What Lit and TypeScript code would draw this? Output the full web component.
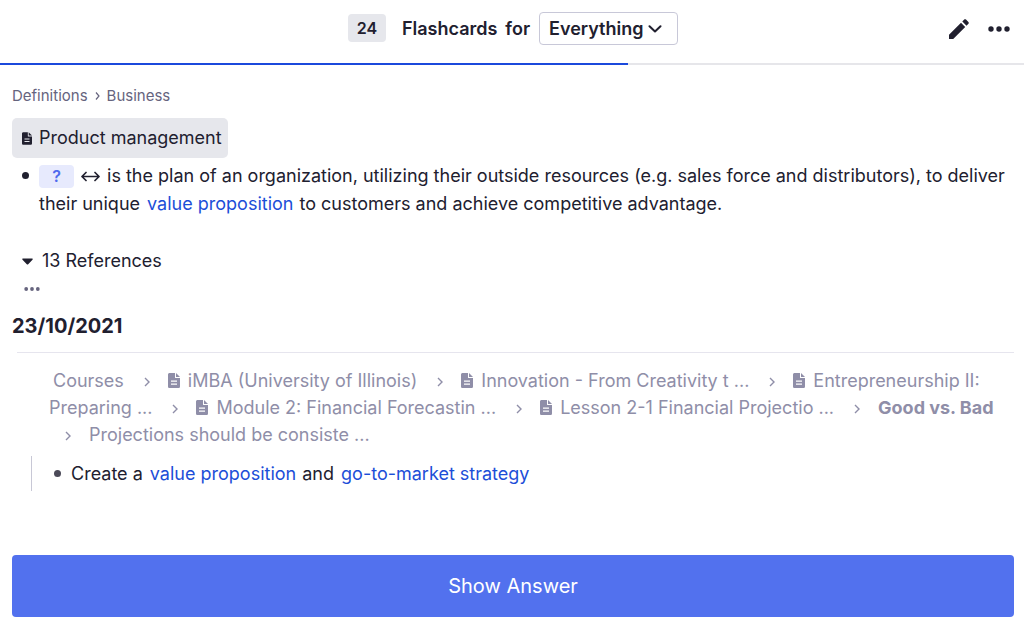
import { LitElement, html, css, svg, nothing } from "lit";
import { customElement, property, state } from "lit/decorators.js";

const docIcon = html`<svg class="doc" viewBox="0 0 12 15" aria-hidden="true">
  <path fill="currentColor" fill-rule="evenodd" d="M1.6 0H7v4.4c0 .4.2.6.6.6H12v8.4c0 .9-.7 1.6-1.6 1.6H1.6C.7 15 0 14.3 0 13.4V1.6C0 .7.7 0 1.6 0ZM3 7.4v1.3h6V7.4ZM3 10.4v1.3h6v-1.3Z"/>
  <path fill="currentColor" d="M8 0l4 4H8Z"/>
</svg>`;

const dots = (r: number) => svg`
  <circle cx="3" cy="3" r=${r}/><circle cx="11" cy="3" r=${r}/><circle cx="19" cy="3" r=${r}/>`;

interface Crumb {
  text: string;
  doc?: boolean;
  strong?: boolean;
}

@customElement("reference-path")
class ReferencePath extends LitElement {
  @property({ attribute: false }) crumbs: Crumb[] = [];

  static styles = css`
    :host { display: block; color: #8f8ea8; font-size: 18px; line-height: 27px; }
    a { color: inherit; text-decoration: none; padding: 0 4px; }
    .strong { font-weight: 700; }
    .doc { width: 12px; height: 15px; margin-right: 8px; vertical-align: -1px; }
    .sep { width: 6px; height: 10px; margin: 0 14px 0 16px; fill: none; stroke: currentColor; stroke-width: 1.4; }
  `;

  render() {
    return html`${this.crumbs.map((c, i) => html`${i
      ? html`<svg class="sep" viewBox="0 0 6 10" aria-hidden="true"><path d="M1 1l4 4-4 4"/></svg>`
      : nothing}<a href="#" class=${c.strong ? "strong" : ""}>${c.doc ? docIcon : nothing}${c.text}</a>`)}`;
  }
}

@customElement("app-root")
class AppRoot extends LitElement {
  @state() private done = 38;
  @state() private total = 62;

  private crumbs: Crumb[] = [
    { text: "Courses" },
    { text: "iMBA (University of Illinois)", doc: true },
    { text: "Innovation - From Creativity t ...", doc: true },
    { text: "Entrepreneurship II: Preparing ...", doc: true },
    { text: "Module 2: Financial Forecastin ...", doc: true },
    { text: "Lesson 2-1 Financial Projectio ...", doc: true },
    { text: "Good vs. Bad", strong: true },
    { text: "Projections should be consiste ..." },
  ];

  static styles = css`
    :host {
      display: flex; flex-direction: column; min-height: 100vh; box-sizing: border-box;
      background: #fff; color: #21202f;
      font-family: Inter, "Liberation Sans", sans-serif; font-size: 18px; line-height: 28px;
    }
    * { box-sizing: border-box; }
    button { font: inherit; color: inherit; border: 0; background: none; padding: 0; cursor: pointer; }
    a { color: #1c4ed8; text-decoration: none; }
    svg { flex: none; }

    header { display: grid; grid-template-columns: 1fr auto 1fr; align-items: center; padding: 12px 12px 18px 14px; }
    .title { grid-column: 2; display: flex; align-items: center; font-weight: 600; }
    .count { background: #e6e7ec; border-radius: 4px; width: 38px; height: 28px; text-align: center; font-size: 16px; margin: 0 16px 2px 0; }
    .title label { display: flex; gap: 8px; }
    .picker { display: grid; align-items: center; margin-left: 9px; }
    .picker > * { grid-area: 1 / 1; }
    .picker select {
      appearance: none; font: inherit; color: inherit; background: #fff; height: 33px; width: 139px;
      border: 1px solid #c8c8d8; border-radius: 4px; padding: 0 8px 0 9px;
    }
    .picker svg { justify-self: end; margin-right: 16px; width: 14px; height: 8px; pointer-events: none; fill: none; stroke: #21202f; stroke-width: 2; stroke-linecap: round; stroke-linejoin: round; }
    .tools { display: flex; justify-content: flex-end; align-items: center; gap: 19px; padding-right: 2px; }
    .tools button { display: flex; }
    .pencil { width: 20px; height: 20px; fill: #21202f; }
    .more { width: 22px; height: 6px; fill: #21202f; }

    .track { height: 2px; background: #e6e6ea; }
    .bar { height: 2px; background: #1b49dc; }

    main { flex: 1; padding: 20px 10px 0 12px; }
    .path { display: flex; align-items: center; gap: 7px; font-size: 15px; line-height: 22px; color: #66647e; }
    .path a { color: inherit; }
    .path svg { width: 5px; height: 8px; fill: none; stroke: currentColor; stroke-width: 1.2; }
    .topic { display: inline-flex; align-items: center; gap: 7px; height: 40px; margin-top: 11px; padding: 0 6px 0 10px; border-radius: 5px; background: #e6e7ec; color: #21202f; }
    .topic .doc { width: 10px; height: 13px; }
    ul { list-style: none; margin: 0; padding: 0; }
    li { display: flex; }
    li::before { content: ""; flex: none; width: 7px; height: 7px; margin-top: 10px; border-radius: 50%; background: currentColor; }
    .card { margin-top: 4px; }
    .card li { padding-left: 10px; gap: 10px; }
    .blank { display: inline-block; width: 35px; height: 23px; margin-right: 7px; border-radius: 4px; background: #e7eafd; color: #4f6bed; font-size: 16px; font-weight: 600; line-height: 23px; text-align: center; }
    .arrow { width: 19px; height: 11px; margin-right: 2px; vertical-align: 0; fill: none; stroke: currentColor; stroke-width: 1.7; stroke-linecap: round; stroke-linejoin: round; }
    .link { padding: 0 2px; }
    .card .link, .found .link { padding-right: 1px; }
    .refs { display: flex; align-items: center; gap: 9px; margin: 29px 0 0 10px; }
    .refs svg { width: 11px; height: 7px; fill: #21202f; }
    .filter { display: flex; margin: 11px 0 0 12px; }
    .filter svg { width: 16px; height: 6px; fill: #66647e; }
    h2 { margin: 20px 0 0; font-size: 20px; line-height: 28px; font-weight: 700; }
    hr { border: 0; height: 1px; background: #e6e5ee; margin: 12px 0 0 5px; }
    reference-path { margin: 14px 10px 0 37px; }
    .found { margin: 8px 0 0 19px; border-left: 1px solid #c8c8d6; padding: 4px 0 3px 22px; }
    .found li { gap: 10px; }
    .found li::before { background: #4b4a58; }

    footer { padding: 24px 10px 9px 12px; }
    .show { display: block; width: 100%; height: 62px; border-radius: 4px; background: #5271ee; color: #fff; font-size: 20px; }
  `;

  render() {
    const percent = (this.done / this.total) * 100;
    return html`
      <header>
        <div class="title">
          <span class="count">24</span>
          <label for="scope"><span>Flashcards</span> <span>for</span></label>
          <div class="picker">
            <select id="scope"><option>Everything</option></select>
            <svg viewBox="0 0 14 8" aria-hidden="true"><path d="M1.5 1.2L7 6.5l5.5-5.3"/></svg>
          </div>
        </div>
        <div class="tools">
          <button aria-label="Edit">
            <svg class="pencil" viewBox="0 0 20 20"><path d="M0 20v-4.2L12 3.8 16.2 8 4.2 20ZM13.3 2.5L15.2.6c.5-.5 1.3-.5 1.8 0L19.4 3c.5.5.5 1.3 0 1.8l-1.9 1.9Z"/></svg>
          </button>
          <button aria-label="More"><svg class="more" viewBox="0 0 22 6">${dots(2.7)}</svg></button>
        </div>
      </header>
      <div class="track" role="progressbar" aria-label="Progress" aria-valuenow=${Math.round(percent)}>
        <div class="bar" style="width:${percent}%"></div>
      </div>
      <main>
        <nav class="path">
          <a href="#">Definitions</a>
          <svg viewBox="0 0 5 8" aria-hidden="true"><path d="M1 .5L4 4 1 7.5"/></svg>
          <a href="#">Business</a>
        </nav>
        <a class="topic" href="#">${docIcon}Product management</a>
        <ul class="card">
          <li><div><span class="blank">?</span><svg class="arrow" viewBox="0 0 19 11" aria-hidden="true"><path d="M1 5.5h17M5 1.5L1 5.5l4 4M14 1.5l4 4-4 4"/></svg> is the plan of an organization, utilizing their outside resources (e.g. sales force and distributors), to deliver their unique <a class="link" href="#">value proposition</a> to customers and achieve competitive advantage.</div></li>
        </ul>
        <button class="refs"><svg viewBox="0 0 11 7" aria-hidden="true"><path d="M1 .5h9c.7 0 1 .7.5 1.2L6.2 6.2c-.4.4-1 .4-1.4 0L.5 1.7C0 1.2.3.5 1 .5Z"/></svg>13 References</button>
        <button class="filter" aria-label="Filter references"><svg viewBox="0 0 22 6">${dots(2.6)}</svg></button>
        <h2>23/10/2021</h2>
        <hr>
        <reference-path .crumbs=${this.crumbs}></reference-path>
        <ul class="found">
          <li><div>Create a <a class="link" href="#">value proposition</a> and <a class="link" href="#">go-to-market strategy</a></div></li>
        </ul>
      </main>
      <footer><button class="show">Show Answer</button></footer>
    `;
  }
}
